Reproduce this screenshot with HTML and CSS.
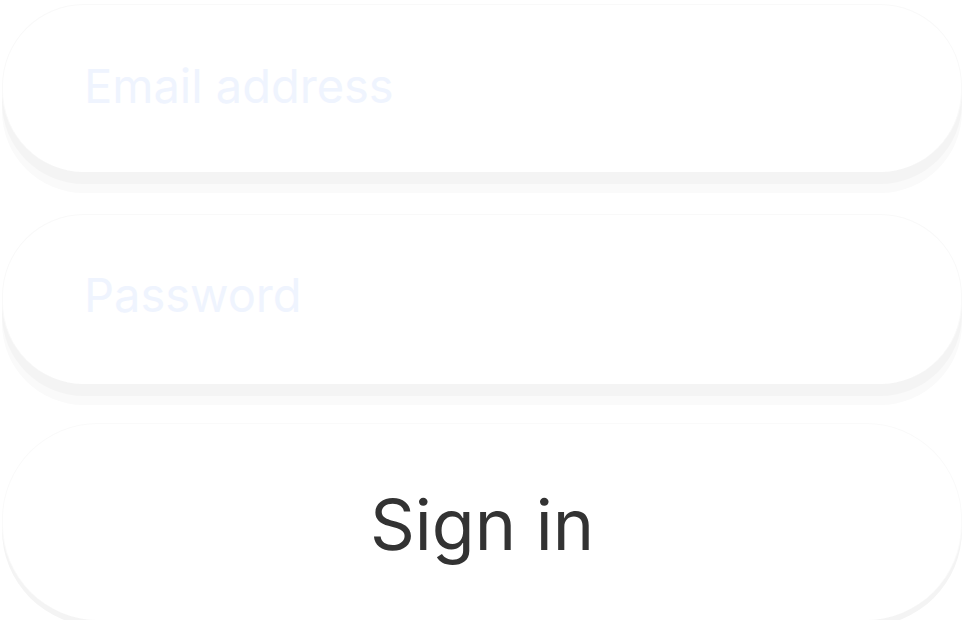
FILE: index.html
```html
<!DOCTYPE html>
<html lang="en">
<head>
<meta charset="utf-8">
<title>Sign in</title>
<link rel="stylesheet" href="styles.css">
</head>
<body>
<form class="form">
  <div class="field field-email"><input class="input" type="email" placeholder="Email address"></div>
  <div class="field field-password"><input class="input input-password" type="password" placeholder="Password"></div>
  <button class="btn" type="button">Sign in</button>
</form>
</body>
</html>
```
FILE: styles.css
```css
html, body {
  margin: 0;
  padding: 0;
  background: #ffffff;
  overflow: hidden;
}
.form {
  display: flex;
  flex-direction: column;
  padding: 4px 2px 0 2px;
  width: 960px;
}
.field {
  box-sizing: border-box;
  background: #ffffff;
  border: 1px solid #f9f9f9;
  border-bottom: none;
  border-radius: 82px;
  box-shadow: 0 12px 0 #f4f4f4, 0 21px 0 #fafafa;
  display: flex;
  align-items: center;
}
.field-email {
  height: 168px;
}
.field-password {
  height: 170px;
  margin-top: 42px;
}
.input {
  border: none;
  outline: none;
  background: transparent;
  width: 100%;
  padding: 0 0 6px 81px;
  font-family: Inter, "Noto Sans", sans-serif;
  font-size: 47px;
  color: #333333;
}
.input-password {
  padding-bottom: 10px;
}
.input::placeholder {
  color: #eff4fe;
}
.btn {
  box-sizing: border-box;
  margin-top: 39px;
  height: 197px;
  background: #ffffff;
  border: 1px solid #fafafa;
  border-bottom: none;
  border-radius: 96px;
  box-shadow: 0 6px 0 #f4f4f4;
  font-family: Inter, "Noto Sans", sans-serif;
  font-size: 70px;
  color: #333333;
  padding: 4px 0 0 0;
  cursor: pointer;
}
```
